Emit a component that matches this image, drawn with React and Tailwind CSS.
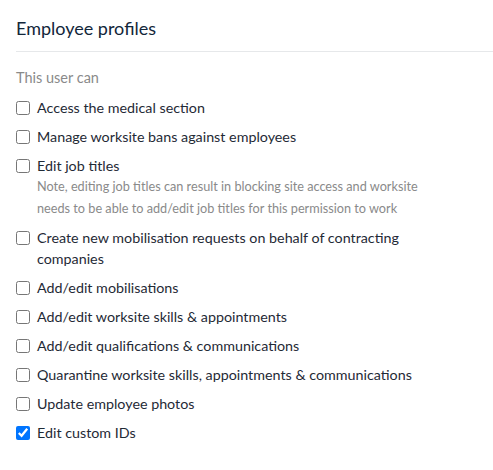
import { useState } from 'react';

const permissions = [
    { id: 'medical', label: 'Access the medical section' },
    { id: 'bans', label: 'Manage worksite bans against employees' },
    {
        id: 'jobTitles',
        label: 'Edit job titles',
        note: 'Note, editing job titles can result in blocking site access and worksite needs to be able to add/edit job titles for this permission to work',
    },
    { id: 'mobRequests', label: 'Create new mobilisation requests on behalf of contracting companies' },
    { id: 'mobs', label: 'Add/edit mobilisations' },
    { id: 'skills', label: 'Add/edit worksite skills & appointments' },
    { id: 'quals', label: 'Add/edit qualifications & communications' },
    { id: 'quarantine', label: 'Quarantine worksite skills, appointments & communications' },
    { id: 'photos', label: 'Update employee photos' },
    { id: 'customIds', label: 'Edit custom IDs' },
];

export default function App() {
    const [checked, setChecked] = useState({ customIds: true });

    const toggle = (id) => setChecked((prev) => ({ ...prev, [id]: !prev[id] }));

    return (
        <div className="bg-white min-h-screen pl-4 pt-[14px] font-['Lato','Open_Sans',sans-serif]">
            {/* Header */}
            <h2 className="text-[18px] leading-[28px] text-[#12263a] pb-[9px] border-b border-[#e6e8ea]">
                Employee profiles
            </h2>

            <p className="mt-[15px] mb-[9px] text-[14.5px] leading-[21px] text-[#8a8a8a]">This user can</p>

            {/* Permissions */}
            <div className="flex flex-col gap-2 pr-[60px]">
                {permissions.map((p) => (
                    <label key={p.id} className="flex items-start gap-[7px] cursor-pointer">
                        <input
                            type="checkbox"
                            checked={!!checked[p.id]}
                            onChange={() => toggle(p.id)}
                            className="m-0 mt-[4px] w-[14px] h-[14px] shrink-0"
                        />
                        <div>
                            <div className="text-[14.3px] leading-[21px] text-[#1f2a36]">{p.label}</div>
                            {p.note && (
                                <div className="text-[12.7px] leading-[21.5px] text-[#8a8a8a] max-w-[390px]">
                                    {p.note}
                                </div>
                            )}
                        </div>
                    </label>
                ))}
            </div>
        </div>
    );
}
